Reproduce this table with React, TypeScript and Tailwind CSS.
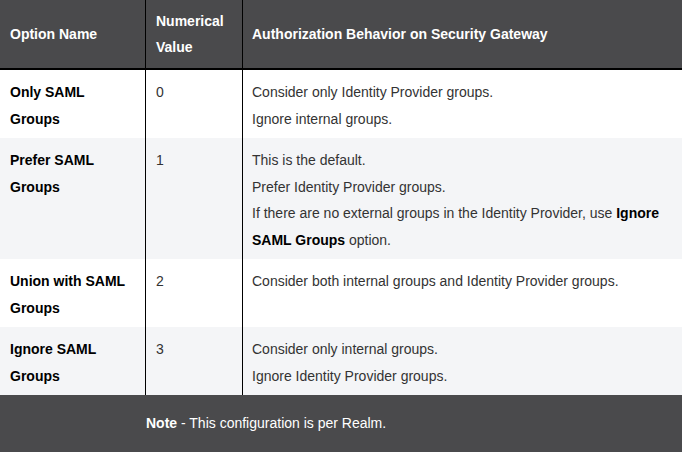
import React from 'react';

type Row = {
  name: string;
  value: string;
  lines: React.ReactNode[];
};

const ROWS: Row[] = [
  {
    name: 'Only SAML Groups',
    value: '0',
    lines: ['Consider only Identity Provider groups.', 'Ignore internal groups.'],
  },
  {
    name: 'Prefer SAML Groups',
    value: '1',
    lines: [
      'This is the default.',
      'Prefer Identity Provider groups.',
      <>
        If there are no external groups in the Identity Provider, use{' '}
        <b className="font-bold text-black">Ignore SAML Groups</b> option.
      </>,
    ],
  },
  {
    name: 'Union with SAML Groups',
    value: '2',
    lines: ['Consider both internal groups and Identity Provider groups.'],
  },
  {
    name: 'Ignore SAML Groups',
    value: '3',
    lines: ['Consider only internal groups.', 'Ignore Identity Provider groups.'],
  },
];

export default function App() {
  return (
    <div className="w-[682px] h-[452px] overflow-hidden bg-white font-['Liberation_Sans',Arial,sans-serif] text-[14px] leading-[26.5px]">
      {/* Header */}
      <div className="grid grid-cols-[146px_97px_1fr] bg-[#4a4a4c] text-white font-bold border-b-2 border-black">
        <div className="border-r border-black pl-[10px] pr-[10px] h-[68px] flex items-center">Option Name</div>
        <div className="border-r border-black pl-[10px] pr-[10px] h-[68px] flex items-center">Numerical Value</div>
        <div className="pl-[9px] pr-[10px] h-[68px] flex items-center">Authorization Behavior on Security Gateway</div>
      </div>

      {/* Body */}
      {ROWS.map((row, i) => (
        <div
          key={row.value}
          className={`grid grid-cols-[146px_97px_1fr] ${i % 2 === 1 ? 'bg-[#f4f5f7]' : 'bg-white'}`}
        >
          <div className="border-r border-black pl-[10px] pr-[10px] pt-[9px] pb-[6px] font-bold text-black">
            {row.name}
          </div>
          <div className="border-r border-black pl-[10px] pr-[10px] pt-[9px] pb-[6px] text-[#333333]">
            {row.value}
          </div>
          <div className="pl-[9px] pr-[10px] pt-[9px] pb-[6px] text-[#333333]">
            {row.lines.map((line, j) => (
              <div key={j}>{line}</div>
            ))}
          </div>
        </div>
      ))}

      {/* Note */}
      <div className="bg-[#4a4a4c] text-white h-[57px] flex items-center pl-[146px]">
        <span>
          <b className="font-bold">Note</b> - This configuration is per Realm.
        </span>
      </div>
    </div>
  );
}
